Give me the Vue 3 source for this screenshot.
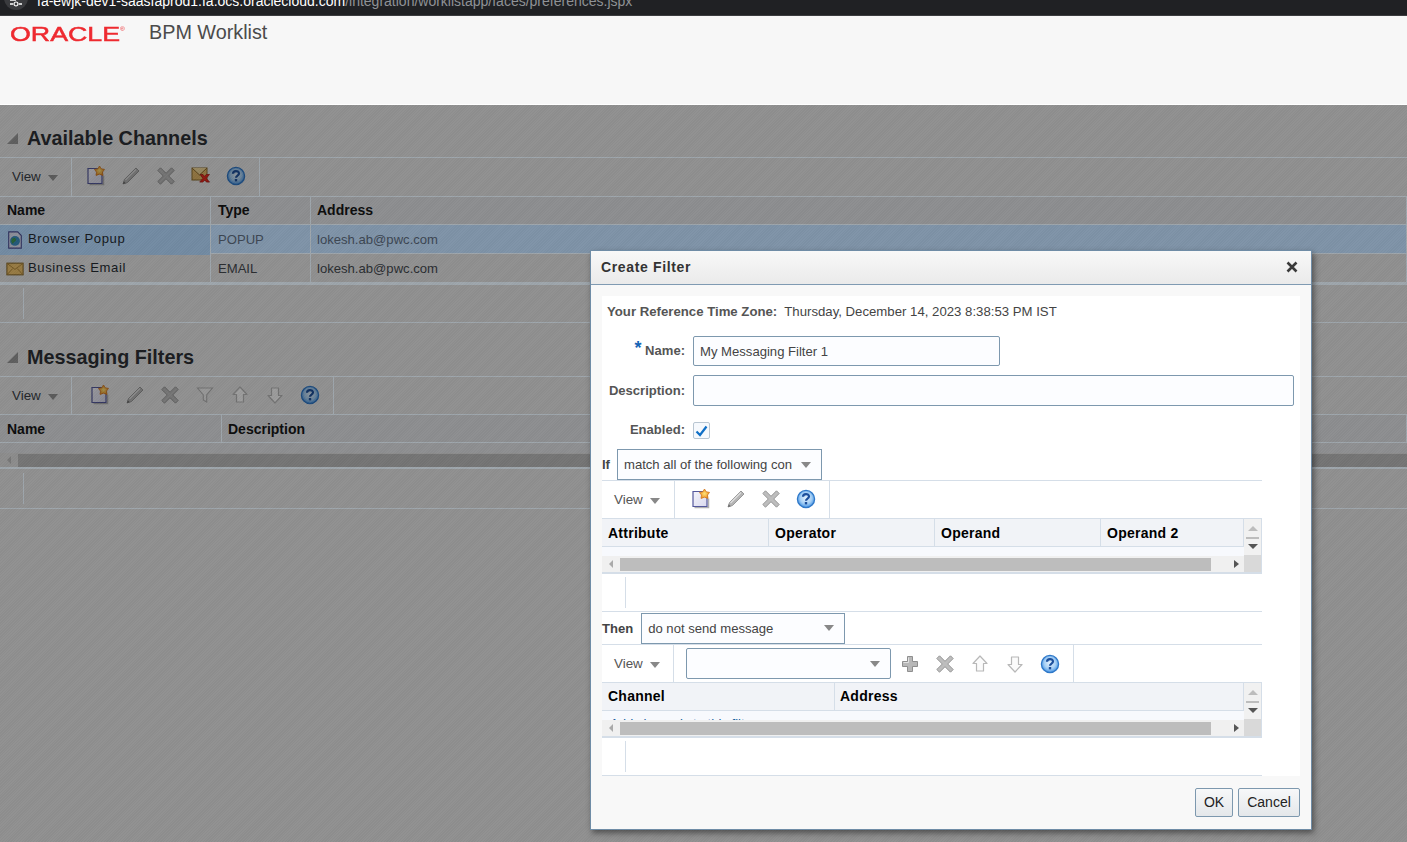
<script setup>
const channels = [
  { name: 'Browser Popup', type: 'POPUP', address: 'lokesh.ab@pwc.com', icon: 'globe', selected: true },
  { name: 'Business Email', type: 'EMAIL', address: 'lokesh.ab@pwc.com', icon: 'mail', selected: false },
]
const channelTools = ['new', 'edit', 'delete', 'mailx', 'help']
const filterTools = ['new', 'edit', 'delete', 'filter', 'up', 'down', 'help']
const conditionTools = ['new', 'edit', 'delete', 'help']
const actionTools = ['plus', 'delete', 'up', 'down', 'help']
const conditionCols = ['Attribute', 'Operator', 'Operand', 'Operand 2']
</script>

<template>
  <div class="app">
    <svg class="defs" width="0" height="0">
      <defs>
        <radialGradient id="help-fill" cx="50%" cy="45%" r="55%">
          <stop offset="0" stop-color="#e4f1fd" />
          <stop offset="0.6" stop-color="#a5cff5" />
          <stop offset="1" stop-color="#3f8fe2" />
        </radialGradient>
        <radialGradient id="star-fill" cx="50%" cy="50%" r="50%">
          <stop offset="0" stop-color="#ffe27a" />
          <stop offset="1" stop-color="#ee9320" />
        </radialGradient>
        <linearGradient id="page-fill" x1="0" y1="0" x2="1" y2="1">
          <stop offset="0" stop-color="#f4f4fb" />
          <stop offset="1" stop-color="#d9d9ee" />
        </linearGradient>
      </defs>
      <symbol id="i-new" viewBox="0 0 20 20">
        <path d="M3.500 18.500h14v-9" fill="none" stroke="#b0b0b0" stroke-width="1.500" />
        <path d="M2 2.500h11l3 3v12H2z" fill="url(#page-fill)" stroke="#54589c" stroke-width="1.200" />
        <path d="M13.500 0l1.700 2.800 3.300.6-2 2.700.5 3.300-3.500-1.200-3.500 1.200.5-3.300-2-2.700 3.300-.6z" fill="url(#star-fill)" stroke="#d0741c" stroke-width=".8" />
      </symbol>
      <symbol id="i-edit" viewBox="0 0 20 20">
        <path d="M15 2l3 3L6.500 16.500l-4.500 1.500 1.500-4.500z" fill="#b4b4b4" stroke="#929292" stroke-width=".9" stroke-linejoin="round" />
        <path d="M15 3.500L4.500 14" stroke="#dedede" stroke-width="1.300" />
        <path d="M2 18l.8-2.700 1.900 1.900z" fill="#6a6a6a" />
      </symbol>
      <symbol id="i-delete" viewBox="0 0 20 20">
        <path d="M4.500 1.800L10 7.300l5.500-5.500 2.700 2.700L12.700 10l5.500 5.500-2.700 2.700L10 12.700l-5.500 5.500-2.700-2.700L7.300 10 1.800 4.500z" fill="#bdbdbd" stroke="#979797" stroke-width="1" stroke-linejoin="round" />
      </symbol>
      <symbol id="i-mailx" viewBox="0 0 20 20">
        <rect x="1" y="2" width="15" height="12" fill="#e3b868" stroke="#8c6a2a" />
        <path d="M1 2l7.500 7L16 2" fill="#f1d698" stroke="#8c6a2a" />
        <path d="M9 8.500h3l1.600 2 1.700-2H18.500l-3.200 3.800 3.200 3.800h-3l-1.800-2.100-1.800 2.100H8.700l3.200-3.800z" fill="#e8261c" stroke="#a01510" stroke-width=".7" />
      </symbol>
      <symbol id="i-help" viewBox="0 0 20 20">
        <circle cx="10" cy="10" r="8.600" fill="url(#help-fill)" stroke="#2f78c8" stroke-width="1.300" />
        <path d="M7 7.800c0-3.600 6-3.600 6-.2 0 2.200-3 2-3 4.200" fill="none" stroke="#1c4f9c" stroke-width="2.200" />
        <rect x="8.800" y="13" width="2.400" height="2.400" fill="#1c4f9c" />
      </symbol>
      <symbol id="i-filter" viewBox="0 0 20 20">
        <path d="M2.500 3h15l-5.800 7v7l-3.400-2v-5z" fill="#f2f2f2" stroke="#b5b5b5" stroke-width="1.100" />
      </symbol>
      <symbol id="i-up" viewBox="0 0 20 20">
        <path d="M10 2l7 7.500h-3.500V17h-7V9.500H3z" fill="#fbfbfb" stroke="#b8b8b8" stroke-width="1.200" stroke-linejoin="round" />
      </symbol>
      <symbol id="i-down" viewBox="0 0 20 20">
        <path d="M10 18l7-7.500h-3.500V3h-7v7.500H3z" fill="#fbfbfb" stroke="#b8b8b8" stroke-width="1.200" stroke-linejoin="round" />
      </symbol>
      <symbol id="i-plus" viewBox="0 0 20 20">
        <path d="M7.500 2.500h5v5h5v5h-5v5h-5v-5h-5v-5h5z" fill="#b8b8b8" stroke="#8f8f8f" stroke-width="1" stroke-linejoin="round" />
        <path d="M3.500 8.500h5v-5" fill="none" stroke="#e2e2e2" />
      </symbol>
      <symbol id="i-globe" viewBox="0 0 20 20">
        <path d="M3 1h10l4 4v14H3z" fill="#dfe3f5" stroke="#4b4f95" stroke-width="1.200" />
        <circle cx="10" cy="11" r="5.500" fill="#3a8fc4" />
        <path d="M6.500 9c2-2.500 4.500-1.500 4.500 1s-3 1.500-3 4.500c-2.200-1-2.600-3.500-1.500-5.500z" fill="#3f9a55" />
      </symbol>
      <symbol id="i-mail" viewBox="0 0 20 20">
        <rect x="1" y="3.500" width="18" height="13" fill="#f2c46c" stroke="#8c6a2a" stroke-width="1.200" />
        <path d="M1.500 4l8.500 6.500L18.500 4M1.500 16l6-6.500M18.500 16l-6-6.500" fill="none" stroke="#ad8436" />
      </symbol>
    </svg>

    <div class="urlbar">
      <span class="site-btn">
        <svg width="12" height="8" viewBox="0 0 12 8"><path d="M0 1h6M0 5h3M9 5h3" stroke="#fff" stroke-width="1.300" /><circle cx="6" cy="5" r="2" fill="none" stroke="#fff" stroke-width="1.200" /></svg>
      </span>
      <span class="url"><b>fa-ewjk-dev1-saasfaprod1.fa.ocs.oraclecloud.com</b>/integration/worklistapp/faces/preferences.jspx</span>
    </div>

    <header class="brand">
      <span class="logo"><span class="logo-word">ORACLE<sup>®</sup></span></span>
      <span class="brand-title">BPM Worklist</span>
    </header>

    <main class="main">
      <section class="panel first">
        <h2 class="panel-title"><i class="disclose"></i>Available Channels</h2>
        <div class="toolbar">
          <div class="view-cell">View <i class="caret"></i></div>
          <div class="tools channels-tools">
            <svg v-for="t in channelTools" :key="t" class="tool"><use :href="'#i-' + t" /></svg>
          </div>
        </div>
        <div class="tbl-row tbl-head chan-cols">
          <div>Name</div><div>Type</div><div>Address</div>
        </div>
        <div
          v-for="c in channels"
          :key="c.name"
          class="tbl-row chan-cols"
          :class="{ selected: c.selected }"
        >
          <div class="name-cell"><svg class="row-icon"><use :href="'#i-' + c.icon" /></svg>{{ c.name }}</div>
          <div class="plain">{{ c.type }}</div>
          <div class="plain">{{ c.address }}</div>
        </div>
        <div class="status-strip chan-strip"><span></span></div>
      </section>

      <section class="panel">
        <h2 class="panel-title"><i class="disclose"></i>Messaging Filters</h2>
        <div class="toolbar second">
          <div class="view-cell">View <i class="caret"></i></div>
          <div class="tools filters-tools">
            <svg v-for="t in filterTools" :key="t" class="tool"><use :href="'#i-' + t" /></svg>
          </div>
        </div>
        <div class="tbl-row tbl-head filter-cols">
          <div>Name</div><div>Description</div>
        </div>
        <div class="empty-row"></div>
        <div class="page-scroll"><i class="arrow-left"></i><span class="page-thumb"></span></div>
        <div class="status-strip filter-strip"><span></span></div>
      </section>
    </main>

    <div class="glass"></div>

    <div class="dialog">
      <div class="dlg-title">
        <span>Create Filter</span>
        <svg class="dlg-close" width="12" height="12" viewBox="0 0 12 12"><path d="M1.500 1.500l9 9M10.500 1.500l-9 9" stroke="#3a3a3a" stroke-width="2.600" /></svg>
      </div>

      <div class="dlg-body">
        <div class="tz-row">
          <span class="lbl">Your Reference Time Zone:</span>
          <span class="tz-value">Thursday, December 14, 2023 8:38:53 PM IST</span>
        </div>

        <div class="form-row name-row">
          <label class="lbl form-lbl"><em>*</em> Name:</label>
          <div class="input name-input">My Messaging Filter 1</div>
        </div>
        <div class="form-row desc-row">
          <label class="lbl form-lbl">Description:</label>
          <div class="input desc-input"></div>
        </div>
        <div class="form-row enabled-row">
          <label class="lbl form-lbl">Enabled:</label>
          <span class="check">
            <svg width="13" height="12" viewBox="0 0 13 12"><path d="M1.500 6.500l3.500 3.500 6.500-8.500" fill="none" stroke="#0f6fc6" stroke-width="2.200" /></svg>
          </span>
        </div>

        <div class="if-row">
          <span class="lbl if-lbl">If</span>
          <div class="select if-select">match all of the following con<i class="caret"></i></div>
        </div>

        <div class="block">
          <div class="toolbar light cond-bar">
            <div class="view-cell">View <i class="caret"></i></div>
            <div class="tools cond-tools">
              <svg v-for="t in conditionTools" :key="t" class="tool"><use :href="'#i-' + t" /></svg>
            </div>
          </div>
          <div class="grid-wrap">
            <div class="grid-main">
              <div class="tbl-row tbl-head cond-cols">
                <div v-for="col in conditionCols" :key="col">{{ col }}</div>
              </div>
              <div class="grid-empty short"></div>
              <div class="h-scroll">
                <i class="arrow-left"></i><span class="h-thumb"></span><i class="arrow-right"></i>
              </div>
            </div>
            <div class="v-scroll">
              <i class="arrow-up"></i><span class="v-thumb"></span><i class="arrow-down"></i>
              <span class="corner"></span>
            </div>
          </div>
          <div class="status-strip light"><span></span></div>

          <div class="then-row">
            <span class="lbl then-lbl">Then</span>
            <div class="select then-select">do not send message<i class="caret"></i></div>
          </div>

          <div class="toolbar light">
            <div class="view-cell">View <i class="caret"></i></div>
            <div class="tools action-tools">
              <div class="select channel-select"><i class="caret"></i></div>
              <svg v-for="t in actionTools" :key="t" class="tool"><use :href="'#i-' + t" /></svg>
            </div>
          </div>
          <div class="grid-wrap">
            <div class="grid-main">
              <div class="tbl-row tbl-head action-cols">
                <div>Channel</div><div>Address</div>
              </div>
              <div class="grid-empty clipped"><a>Add channels to this filter</a></div>
              <div class="h-scroll">
                <i class="arrow-left"></i><span class="h-thumb"></span><i class="arrow-right"></i>
              </div>
            </div>
            <div class="v-scroll">
              <i class="arrow-up"></i><span class="v-thumb"></span><i class="arrow-down"></i>
              <span class="corner"></span>
            </div>
          </div>
          <div class="status-strip light"><span></span></div>
        </div>
      </div>

      <div class="dlg-foot">
        <button class="btn ok">OK</button>
        <button class="btn cancel">Cancel</button>
      </div>
    </div>
  </div>
</template>

<style scoped>
.app {
  position: relative;
  width: 100%;
  height: 842px;
  overflow: hidden;
  background: #909090;
  font-family: "Liberation Sans", Arial, sans-serif;
  font-size: 14px;
  color: #222;
}
.defs {
  position: absolute;
}

.urlbar {
  height: 15px;
  background: #202124;
  border-bottom: 1px solid #3b3c3f;
  overflow: hidden;
  display: flex;
}
.site-btn {
  width: 24px;
  height: 24px;
  margin: -14px 0 0 4px;
  border-radius: 50%;
  background: #3a3b3e;
  display: flex;
  align-items: flex-end;
  justify-content: center;
  padding-bottom: 3px;
  box-sizing: border-box;
}
.url {
  margin: -7px 0 0 9px;
  font-size: 14px;
  line-height: 17px;
  color: #8f9296;
  white-space: nowrap;
}
.url b {
  font-weight: 400;
  color: #fff;
}

.brand {
  height: 88px;
  background: #f7f7f7;
  border-bottom: 1px solid #fff;
  display: flex;
  align-items: flex-start;
}
.logo {
  width: 139px;
  margin: 8px 0 0 10px;
  height: 20px;
}
.logo-word {
  display: inline-block;
  font-size: 20.6px;
  line-height: 20px;
  font-weight: 400;
  -webkit-text-stroke: 0.5px #ee2a30;
  color: #ee2a30;
  white-space: nowrap;
  transform: scaleX(1.3);
  transform-origin: left center;
}
.logo-word sup {
  font-size: 5px;
  line-height: 0;
  -webkit-text-stroke: 0;
  vertical-align: 10px;
}
.brand-title {
  font-size: 19.8px;
  line-height: 32px;
  color: #4b4b4b;
}

.main {
  background: #909090;
  height: 737px;
}
.panel-title {
  margin: 0;
  height: 32px;
  padding: 18px 0 3px 7px;
  display: flex;
  align-items: center;
  font-size: 19.8px;
  font-weight: 700;
  color: #1a1c20;
}
.first .panel-title {
  padding-top: 17px;
}
.disclose {
  width: 0;
  height: 0;
  margin-right: 9px;
  border-left: 11px solid transparent;
  border-bottom: 11px solid #5f5f5f;
}

.toolbar {
  height: 38px;
  display: flex;
  border-top: 1px solid #9ea6ac;
  border-bottom: 1px solid #9ea6ac;
}
.toolbar.second {
  height: 37px;
}
.toolbar.light {
  border-color: #d5dee8;
  border-bottom: 0;
  height: 37px;
}
.view-cell {
  width: 72px;
  box-sizing: border-box;
  padding-left: 12px;
  border-right: 1px solid #9ea6ac;
  font-size: 13.4px;
  line-height: 37px;
  color: #23262a;
  flex: none;
}
.light .view-cell {
  color: #555;
  border-color: #d5dee8;
}
.cond-bar .view-cell {
  width: 73px;
}
.caret {
  display: inline-block;
  width: 0;
  height: 0;
  margin-left: 3px;
  vertical-align: 0;
  border: 5px solid transparent;
  border-top: 6px solid #5a5a5a;
  border-bottom: 0;
}
.light .caret,
.select .caret {
  border-top-color: #888;
}
.tools {
  display: flex;
  align-items: center;
  gap: 15px;
  border-right: 1px solid #9ea6ac;
}
.light .tools {
  border-color: #d5dee8;
}
.channels-tools {
  padding: 0 13px 2px 14px;
}
.filters-tools {
  padding: 0 13px 2px 18px;
}
.cond-tools {
  padding: 0 13px 2px 16px;
}
.action-tools {
  padding: 0 13px 0 12px;
}
.tool {
  width: 20px;
  height: 20px;
  flex: none;
}
.main .tool,
.main .row-icon {
  filter: brightness(0.62);
}

.tbl-row {
  display: grid;
  height: 28px;
  border-bottom: 1px solid #9ea6ac;
}
.tbl-row > div {
  padding-left: 7px;
  border-right: 1px solid #9ea6ac;
  line-height: 28px;
  white-space: nowrap;
  font-size: 13.1px;
}
.tbl-head {
  height: 27px;
  background: #8d8e90;
  font-weight: 700;
  color: #0c0c0c;
}
.tbl-row.tbl-head > div {
  line-height: 27px;
  font-size: 14px;
}
.chan-cols {
  grid-template-columns: 211px 100px 1fr;
}
.chan-cols > div:last-child {
  padding-left: 6px;
}
.filter-cols {
  grid-template-columns: 222px 1fr;
}
.filter-cols > div:last-child {
  padding-left: 6px;
}
.tbl-row.filter-cols > div {
  line-height: 28px;
}
.selected {
  background: #7f93a8;
}
.selected .name-cell {
  background: #738ba3;
}
.tbl-row > .name-cell {
  display: flex;
  align-items: center;
  padding-left: 7px;
  color: #14181c;
  line-height: 27px;
  padding-bottom: 3px;
  letter-spacing: 0.6px;
}
.row-icon {
  width: 18px;
  height: 18px;
  flex: none;
}
.name-cell .row-icon {
  margin: 2px 4px 0 -1px;
}
.plain {
  color: #2a2d30;
  padding-top: 1px;
}
.selected .plain {
  color: #3c4652;
}
.status-strip {
  border-top: 2px solid #9ea6ac;
  border-bottom: 1px solid #9ea6ac;
  display: flex;
  align-items: center;
}
.status-strip span {
  margin-left: 23px;
  width: 1px;
  height: 31px;
  background: #9ea6ac;
}
.chan-strip {
  height: 37px;
}
.filter-strip {
  border-top: 0;
  height: 39px;
}
.empty-row {
  height: 10px;
  background: #8e8f91;
}
.page-scroll {
  height: 14px;
  background: #8c8c8c;
  border-bottom: 2px solid #9ea6ac;
  display: flex;
  align-items: center;
}
.page-thumb {
  flex: 1;
  height: 13px;
  margin-left: 7px;
  background: #757575;
}
.arrow-left {
  width: 0;
  height: 0;
  margin-left: 7px;
  border: 4px solid transparent;
  border-right: 4px solid #777;
  border-left: 0;
}
.arrow-right {
  width: 0;
  height: 0;
  margin: 0 5px 0 auto;
  border: 4px solid transparent;
  border-left: 5px solid #555;
  border-right: 0;
}

.glass {
  position: absolute;
  left: 0;
  right: 0;
  top: 105px;
  bottom: 0;
  pointer-events: none;
  background: repeating-linear-gradient(135deg, rgba(0, 0, 0, 0.025) 0 1px, rgba(255, 255, 255, 0.015) 1px 2px);
}

.dialog {
  position: absolute;
  left: 590px;
  top: 250px;
  width: 722px;
  height: 580px;
  box-sizing: border-box;
  border: 1px solid #6f8ca6;
  background: #f8f8f8;
  box-shadow: 2px 3px 6px rgba(0, 0, 0, 0.45);
  display: flex;
  flex-direction: column;
}
.dlg-title {
  height: 31px;
  flex: none;
  padding: 0 13px 2px 10px;
  display: flex;
  align-items: center;
  justify-content: space-between;
  background: linear-gradient(#f8f8f8, #eaeaea);
  border-bottom: 1px solid #7f9ab2;
  font-weight: 700;
  letter-spacing: 0.65px;
  color: #333;
}
.dlg-body {
  margin: 11px 11px 0 11px;
  height: 480px;
  flex: none;
  background: #fff;
  display: flex;
  flex-direction: column;
}
.lbl {
  font-weight: 700;
  color: #555;
  font-size: 13.05px;
}
.tz-row {
  height: 30px;
  padding-left: 5px;
  display: flex;
  align-items: center;
  gap: 7px;
}
.tz-row .lbl {
  font-size: 13.2px;
}
.tz-value {
  font-size: 13.2px;
  color: #444;
}
.form-row {
  display: flex;
  align-items: center;
  gap: 8px;
}
.form-lbl {
  width: 83px;
  flex: none;
  text-align: right;
  margin-top: -2px;
}
.form-lbl em {
  font-style: normal;
  color: #1565b5;
  font-size: 18px;
  line-height: 10px;
  vertical-align: 1px;
}
.desc-row .form-lbl {
  margin-top: 0;
}
.name-row {
  margin-top: 10px;
}
.desc-row {
  margin-top: 9px;
}
.enabled-row {
  margin-top: 16px;
}
.input {
  box-sizing: border-box;
  border: 1px solid #7d98ae;
  border-radius: 2px;
  background: #fcfdff;
  padding-left: 6px;
  font-size: 13.1px;
  color: #444;
  display: flex;
  align-items: center;
}
.name-input {
  width: 307px;
  height: 30px;
}
.desc-input {
  width: 601px;
  height: 31px;
}
.check {
  width: 17px;
  height: 17px;
  box-sizing: border-box;
  border: 1px solid #b9c6d2;
  border-radius: 2px;
  background: #f6f9fd;
  display: flex;
  align-items: center;
  justify-content: center;
}
.if-row {
  margin-top: 10px;
  height: 31px;
  display: flex;
  align-items: center;
  gap: 7px;
}
.if-lbl,
.then-lbl {
  color: #444;
}
.select {
  box-sizing: border-box;
  border: 1px solid #7d98ae;
  background: #fcfdff;
  padding-left: 6px;
  font-size: 13.1px;
  color: #444;
  display: flex;
  align-items: center;
  justify-content: space-between;
  padding-right: 10px;
  white-space: nowrap;
  flex: none;
}
.if-select {
  width: 205px;
  height: 31px;
}
.then-select {
  width: 204px;
  height: 31px;
}
.channel-select {
  width: 205px;
  height: 31px;
  margin-right: -6px;
  border-radius: 2px;
  justify-content: flex-end;
}
.block {
  width: 660px;
}
.grid-wrap {
  display: flex;
  border: 1px solid #d5dee8;
  border-width: 1px 1px 0 0;
}
.grid-main {
  flex: 1;
  min-width: 0;
}
.grid-wrap .tbl-row {
  border-color: #d5dee8;
}
.grid-wrap .tbl-head {
  background: #f1f3f7;
  color: #000;
  letter-spacing: 0.25px;
}
.grid-wrap .tbl-head > div {
  border-color: #d5dee8;
  padding-left: 6px;
}
.cond-cols {
  grid-template-columns: 167px 166px 166px 1fr;
}
.grid-wrap .cond-cols > div {
  line-height: 28px;
}
.action-cols {
  grid-template-columns: 233px 1fr;
}
.grid-wrap .action-cols > div:last-child {
  padding-left: 5px;
}
.grid-empty {
  background: #f7f9fd;
  overflow: hidden;
}
.grid-empty.short {
  height: 9px;
}
.grid-empty.clipped {
  height: 9px;
  padding: 5px 0 0 8px;
  box-sizing: border-box;
}
.clipped a {
  display: block;
  color: #145c9e;
  line-height: 16px;
  font-size: 13.1px;
}
.h-scroll {
  height: 16px;
  background: #f0f0f0;
  display: flex;
  align-items: center;
}
.h-scroll .arrow-left {
  border-right-color: #aaa;
}
.h-thumb {
  width: 591px;
  height: 13px;
  margin-left: 7px;
  background: #bdbdbd;
}
.v-scroll {
  width: 17px;
  flex: none;
  position: relative;
  background: #f1f1f1;
  display: flex;
  flex-direction: column;
  align-items: center;
}
.arrow-up {
  width: 0;
  height: 0;
  margin-top: 7px;
  border: 5px solid transparent;
  border-bottom: 5px solid #bdbdbd;
  border-top: 0;
}
.v-thumb {
  width: 13px;
  height: 2px;
  margin-top: 6px;
  background: #bdbdbd;
}
.arrow-down {
  width: 0;
  height: 0;
  margin-top: 5px;
  border: 5px solid transparent;
  border-top: 5px solid #555;
  border-bottom: 0;
}
.corner {
  position: absolute;
  left: 0;
  right: 0;
  bottom: 0;
  height: 17px;
  background: #d9d9d9;
}
.status-strip.light {
  height: 37px;
  border-top: 2px solid #d5dee8;
  border-bottom: 1px solid #d5dee8;
}
.status-strip.light span {
  background: #d5dee8;
}
.then-row {
  height: 32px;
  display: flex;
  align-items: center;
  gap: 8px;
}
.dlg-foot {
  flex: 1;
  display: flex;
  justify-content: flex-end;
  align-items: flex-start;
  gap: 5px;
  padding: 12px 11px 0 0;
}
.btn {
  height: 29px;
  padding: 0 0 2px;
  box-sizing: border-box;
  border: 1px solid #7d98ae;
  border-radius: 2px;
  background: linear-gradient(#f7f8f9, #e4e7ea);
  font-family: inherit;
  font-size: 14px;
  color: #222;
}
.ok {
  width: 38px;
}
.cancel {
  width: 62px;
}
</style>

<style>
html,
body {
  margin: 0;
  overflow: hidden;
}
</style>
